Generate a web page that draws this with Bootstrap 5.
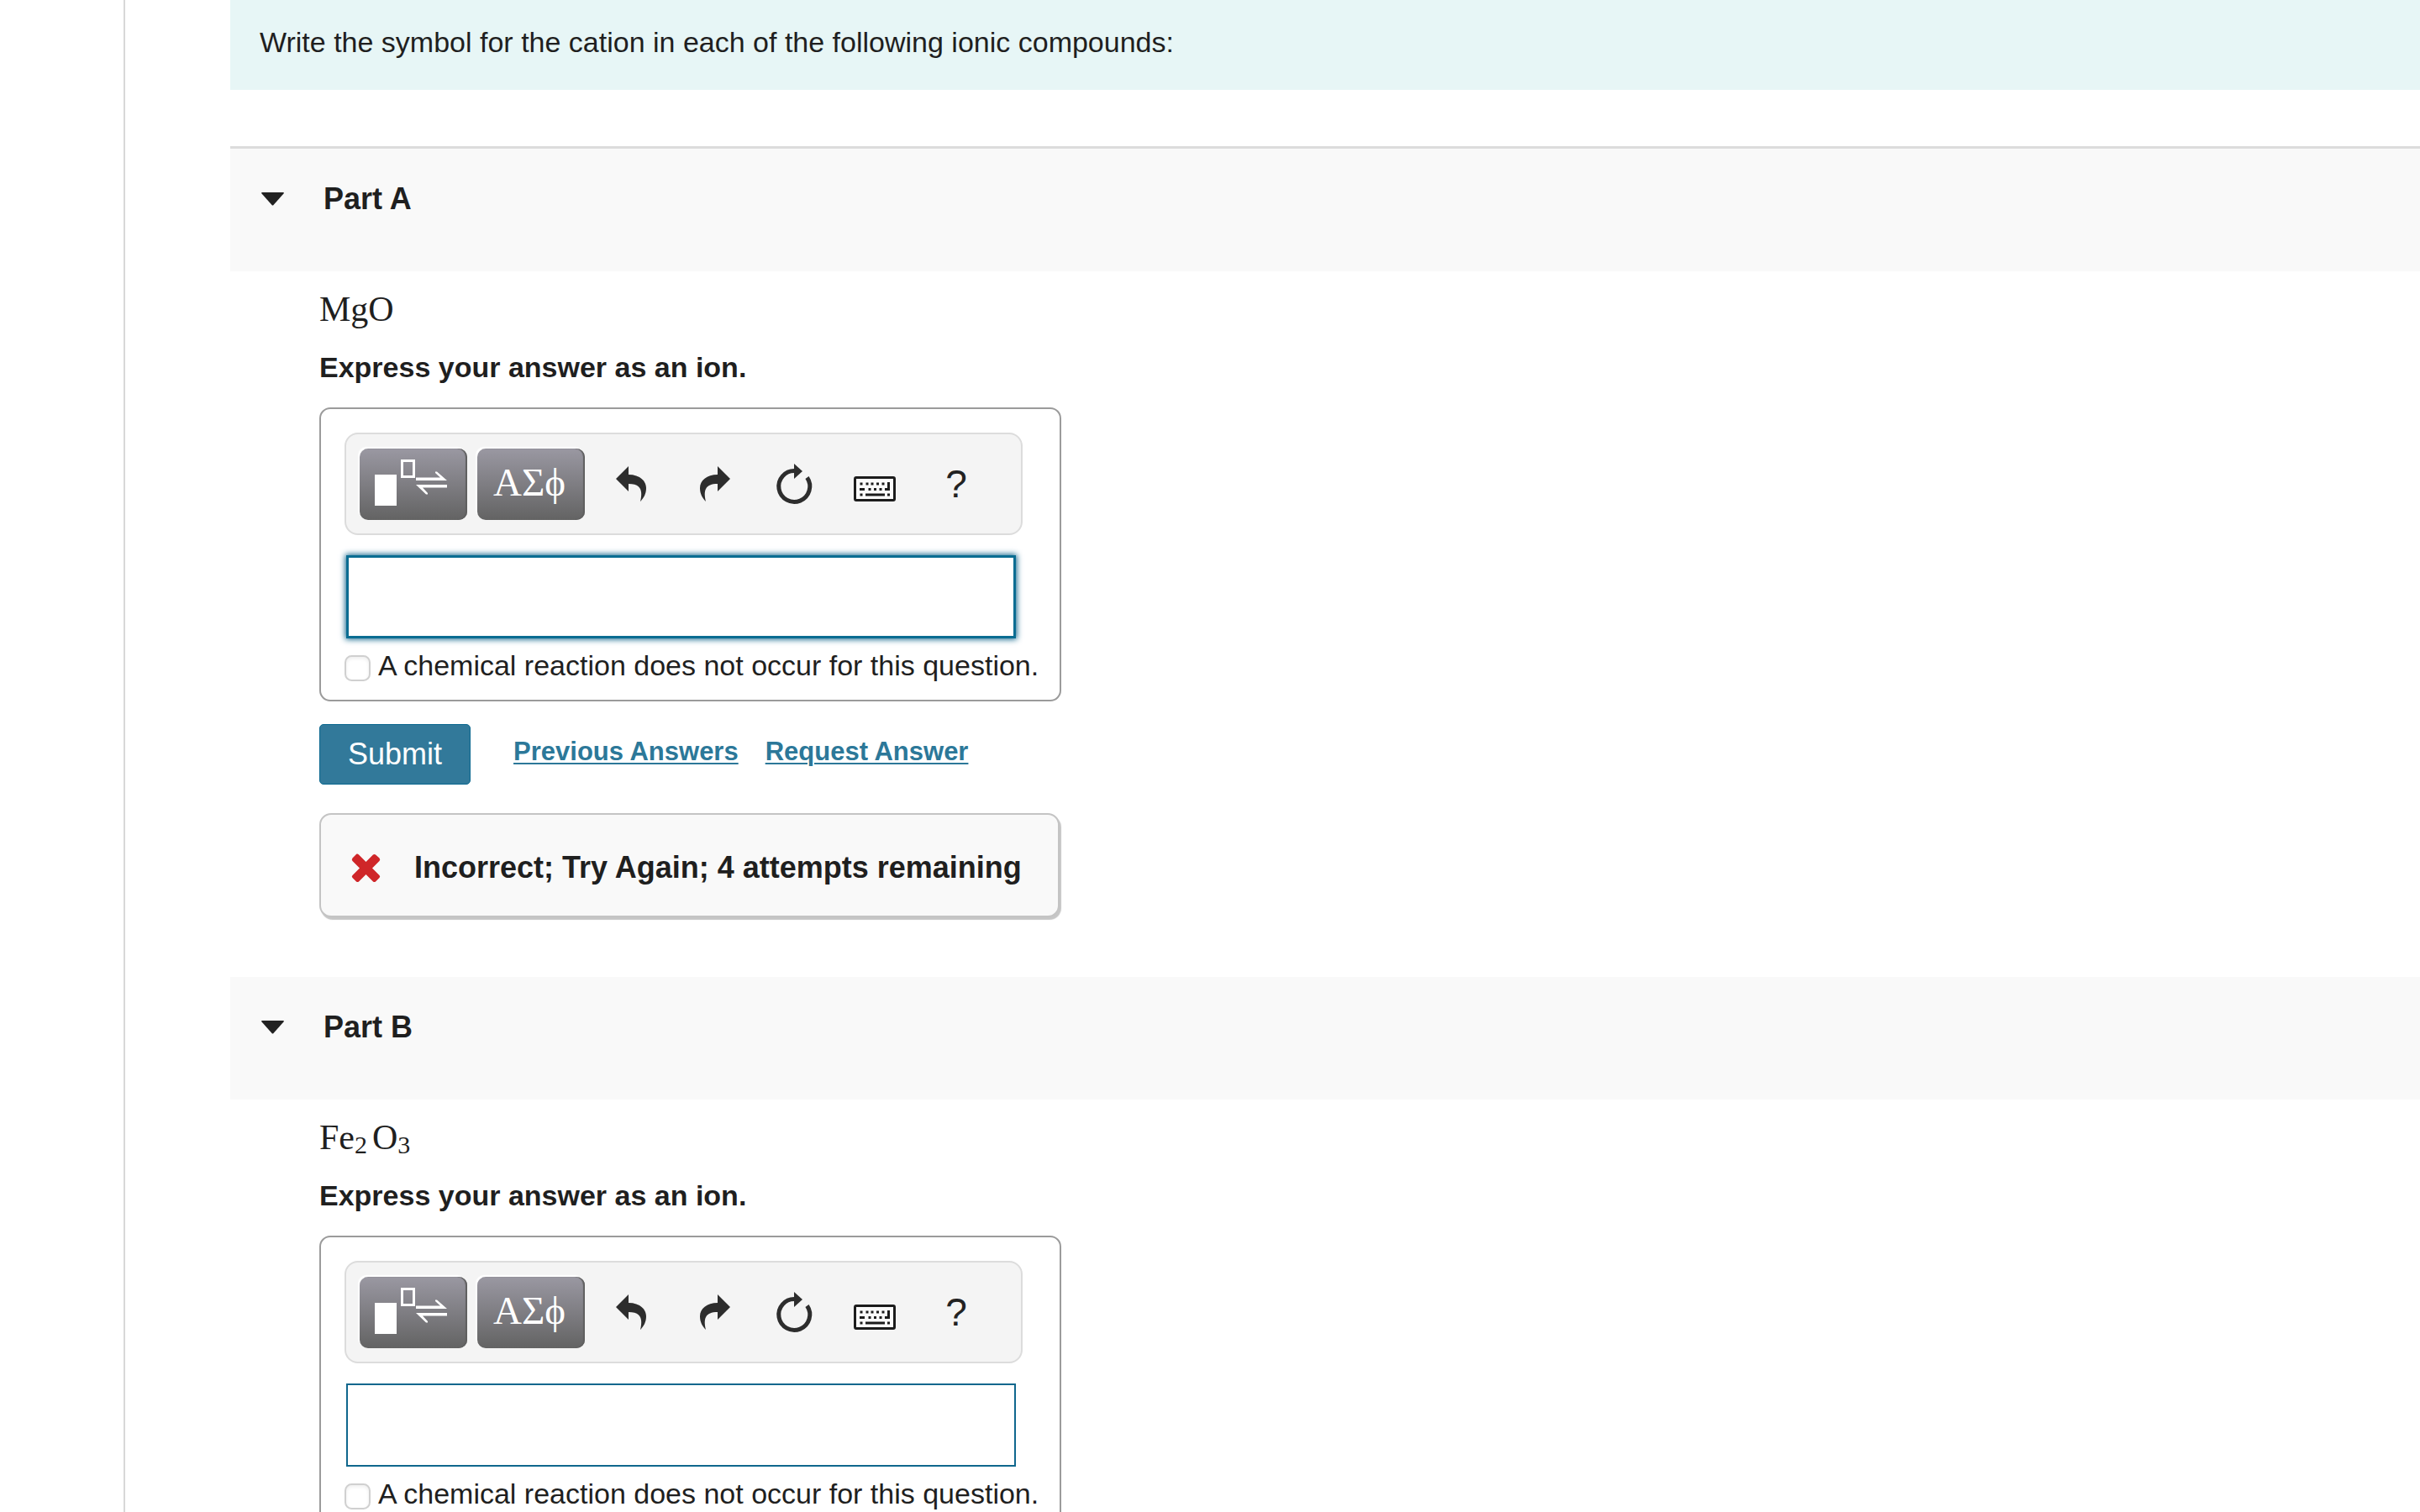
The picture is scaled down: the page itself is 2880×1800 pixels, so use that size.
<!DOCTYPE html>
<html lang="en">
<head>
<meta charset="utf-8">
<meta name="viewport" content="width=device-width, initial-scale=1">
<title>Ionic compounds</title>
<link href="https://cdn.jsdelivr.net/npm/bootstrap@5.3.0/dist/css/bootstrap.min.css" rel="stylesheet">
<style>
  body { font-family: "Liberation Sans", Arial, sans-serif; font-size: 34px; line-height: 40px; color: #1f1f1f; background: #fff; }
  .side-rail { width: 149px; border-right: 2px solid #d8d8d8; }
  .problem { margin-left: 125px; }
  .intro { background: #e7f6f6; padding: 30px 35px 37px; margin-bottom: 67px; }
  .part-list { border-top: 3px solid #dcdcdc; }
  .part-head { background: #f9f9f9; padding: 38px 37px 64px; }
  .part-title { font-size: 36px; line-height: 44px; margin-left: 47px; }
  .part-body { padding: 20px 0 71px 106px; }
  .formula { font-family: "Liberation Serif", serif; font-size: 42px; line-height: 50px; margin-bottom: 24px; }
  .formula sub { font-size: 30px; line-height: 1; bottom: -5px; margin-right: 6px; }
  .direction { margin-bottom: 28px; }
  .answer-box { width: 883px; border: 2px solid #9b9b9b; border-radius: 13px; padding: 28px 44px 21px 28px; }
  .tool-bar { background: #f4f4f4; border: 2px solid #dcdcdc; border-radius: 16px; padding: 17px 16px 16px; margin-bottom: 24px; }
  .palette { width: 128px; height: 85px; padding: 0; border: 0; border-radius: 10px; color: #fff; background: linear-gradient(#9a98a2, #636363); box-shadow: -2px -2px 1px #fff, inset -2px 0 1px #5f5f5f; }
  .palette svg { margin-top: -1px; }
  .greek { font-family: "Liberation Serif", serif; font-size: 47px; line-height: 50px; padding: 0 4px 6px 0; }
  .tool { width: 96px; height: 84px; padding: 0; border: 0; background: none; color: #2d2d2d; }
  .help { font-size: 46px; line-height: 50px; color: #222; padding-right: 4px; }
  .answer { height: 99px; border: 2px solid #10678d; border-radius: 0; margin: 0 8px 0 2px; width: auto; }
  .answer:focus, .answer.active { border: 3px solid #0a6d92; box-shadow: 0 0 7px 1px #0a6088; }
  .tick { width: 31px; height: 31px; margin: 0; border: 2px solid #d0d0d0; border-radius: 7px; box-shadow: inset 0 2px 4px #eee; }
  .tick-row { gap: 9px; margin-top: 12px; }
  .tick-row .tick { margin-top: 8px; }
  .actions { gap: 51px; margin-top: 27px; }
  .submit { font-size: 36px; line-height: 44px; padding: 13px 33px; border: 1px solid #0a678e; border-radius: 5px; background: #32799a; color: #fff; }
  .action-links { gap: 32px; font-size: 31px; padding-bottom: 6px; }
  .action-links a { color: #2c7899; text-decoration-thickness: 2px; text-underline-offset: 3px; }
  .feedback { width: 881px; font-size: 36px; line-height: 44px; gap: 40px; margin-top: 34px; padding: 41px 36px 35px; background: #f9f9f9; border: 2px solid #c4c4c4; border-radius: 14px; box-shadow: 2px 3px 1px #c6c6c6; }
</style>
</head>
<body>
<svg class="d-none" aria-hidden="true">
  <symbol id="caret" viewBox="0 0 27 16"><path d="M1 0H26Q27.500 0 26.500 1.500L14.500 15Q13.500 16 12.500 15L.5 1.500Q-.5 0 1 0Z" fill="#222"/></symbol>
  <symbol id="template" viewBox="0 0 128 84">
    <path d="M18 31H44V68H18Z" fill="#fff"/>
    <path d="M50.500 14.500H64.500V33.500H50.500Z" fill="none" stroke="#fff" stroke-width="3"/>
    <path d="M67 38V34.500H96L90 29V27.500H92L104 38ZM104 43V46.500H75L81 53V54.500H79L67 43Z" fill="#fff"/>
  </symbol>
  <symbol id="undo" viewBox="0 0 96 84"><path d="M25 36L40 21V31C53 31 61 38 61 47C61 54 58 59 54 63C57 50 55 42 40 42V51Z" fill="currentColor"/></symbol>
  <symbol id="redo" viewBox="0 0 96 84"><path d="M65 36L50 21V31C37 31 29 38 29 47C29 54 32 59 36 63C33 50 35 42 50 42V51Z" fill="currentColor"/></symbol>
  <symbol id="reset" viewBox="0 0 96 84"><path d="M60.500 34.500A18.500 18.500 0 1 1 46 26.500" fill="none" stroke="currentColor" stroke-width="5"/><path d="M45 18L55 27L45 36Z" fill="currentColor"/></symbol>
  <symbol id="keyboard" viewBox="0 0 96 84">
    <rect x="21.500" y="34.500" width="47" height="27" rx="1.500" fill="#fafafa" stroke="#1c1c1c" stroke-width="3"/>
    <path d="M27.500 42H30.500M34.500 42H37.500M40.500 42H43.500M47 42H50M53.500 42H56.500M27 48.500H33M37.500 48.500H40.500M44 48.500H47M50.500 48.500H53.500M57 48.500H63M61.500 40V50M27.500 55H30.500M34 55H57M60 55H63" fill="none" stroke="#1c1c1c" stroke-width="3"/>
  </symbol>
  <symbol id="wrong" viewBox="0 0 35 35"><path d="M7 .5Q8 .5 9 1.500L17.500 10L26 1.500Q27.500 .5 29 1.500L33.500 5.500Q35 7.500 33.500 9L25 17.500L33.500 26Q35 27.500 33.500 29L29 33.500Q27.500 34.500 26 33.500L17.500 25L9 33.500Q7.500 34.500 6 33.500L1.500 29Q0 27.500 1.500 26L10 17.500L1.500 9Q0 7.500 1.500 5.500L5.500 1.500Q6 .5 7 .5Z" fill="#cf2629"/></symbol>
</svg>

<div class="d-flex vh-100 overflow-hidden">
  <aside class="side-rail flex-shrink-0"></aside>
  <main class="problem flex-grow-1">
    <p class="intro">Write the symbol for the cation in each of the following ionic compounds:</p>

    <div class="part-list">
      <section>
        <header class="part-head d-flex align-items-center">
          <svg width="27" height="16" aria-hidden="true"><use href="#caret"/></svg>
          <h2 class="part-title fw-bold mb-0">Part A</h2>
        </header>
        <div class="part-body">
          <p class="formula">MgO</p>
          <p class="direction fw-bold">Express your answer as an ion.</p>
          <div class="answer-box d-flex flex-column">
            <div class="tool-bar d-flex" role="toolbar" aria-label="Answer tools">
              <div class="d-flex gap-2 me-2 pe-1">
                <button type="button" class="palette me-1" aria-label="Templates"><svg class="d-block" width="128" height="84"><use href="#template"/></svg></button>
                <button type="button" class="palette greek">ΑΣϕ</button>
              </div>
              <button type="button" class="tool" aria-label="Undo"><svg class="d-block" width="96" height="84"><use href="#undo"/></svg></button>
              <button type="button" class="tool" aria-label="Redo"><svg class="d-block" width="96" height="84"><use href="#redo"/></svg></button>
              <button type="button" class="tool" aria-label="Reset"><svg class="d-block" width="96" height="84"><use href="#reset"/></svg></button>
              <button type="button" class="tool" aria-label="Keyboard shortcuts"><svg class="d-block" width="96" height="84"><use href="#keyboard"/></svg></button>
              <button type="button" class="tool help">?</button>
            </div>
            <input type="text" class="form-control answer active" aria-label="Answer for Part A">
            <div class="tick-row d-flex">
              <input class="form-check-input tick flex-shrink-0" type="checkbox" id="noReactionA">
              <label class="text-nowrap" for="noReactionA">A chemical reaction does not occur for this question.</label>
            </div>
          </div>
          <div class="actions d-flex align-items-center">
            <button type="submit" class="btn submit">Submit</button>
            <div class="action-links d-flex fw-bold">
              <a href="#">Previous Answers</a>
              <a href="#">Request Answer</a>
            </div>
          </div>
          <div class="feedback d-flex align-items-center fw-bold" role="status">
            <svg class="flex-shrink-0" width="35" height="35" aria-hidden="true"><use href="#wrong"/></svg>
            <span class="text-nowrap">Incorrect; Try Again; 4 attempts remaining</span>
          </div>
        </div>
      </section>

      <section>
        <header class="part-head d-flex align-items-center">
          <svg width="27" height="16" aria-hidden="true"><use href="#caret"/></svg>
          <h2 class="part-title fw-bold mb-0">Part B</h2>
        </header>
        <div class="part-body">
          <p class="formula">Fe<sub>2</sub>O<sub>3</sub></p>
          <p class="direction fw-bold">Express your answer as an ion.</p>
          <div class="answer-box d-flex flex-column">
            <div class="tool-bar d-flex" role="toolbar" aria-label="Answer tools">
              <div class="d-flex gap-2 me-2 pe-1">
                <button type="button" class="palette me-1" aria-label="Templates"><svg class="d-block" width="128" height="84"><use href="#template"/></svg></button>
                <button type="button" class="palette greek">ΑΣϕ</button>
              </div>
              <button type="button" class="tool" aria-label="Undo"><svg class="d-block" width="96" height="84"><use href="#undo"/></svg></button>
              <button type="button" class="tool" aria-label="Redo"><svg class="d-block" width="96" height="84"><use href="#redo"/></svg></button>
              <button type="button" class="tool" aria-label="Reset"><svg class="d-block" width="96" height="84"><use href="#reset"/></svg></button>
              <button type="button" class="tool" aria-label="Keyboard shortcuts"><svg class="d-block" width="96" height="84"><use href="#keyboard"/></svg></button>
              <button type="button" class="tool help">?</button>
            </div>
            <input type="text" class="form-control answer" aria-label="Answer for Part B">
            <div class="tick-row d-flex">
              <input class="form-check-input tick flex-shrink-0" type="checkbox" id="noReactionB">
              <label class="text-nowrap" for="noReactionB">A chemical reaction does not occur for this question.</label>
            </div>
          </div>
        </div>
      </section>
    </div>
  </main>
</div>
<script src="https://cdn.jsdelivr.net/npm/bootstrap@5.3.0/dist/js/bootstrap.bundle.min.js"></script>
</body>
</html>
